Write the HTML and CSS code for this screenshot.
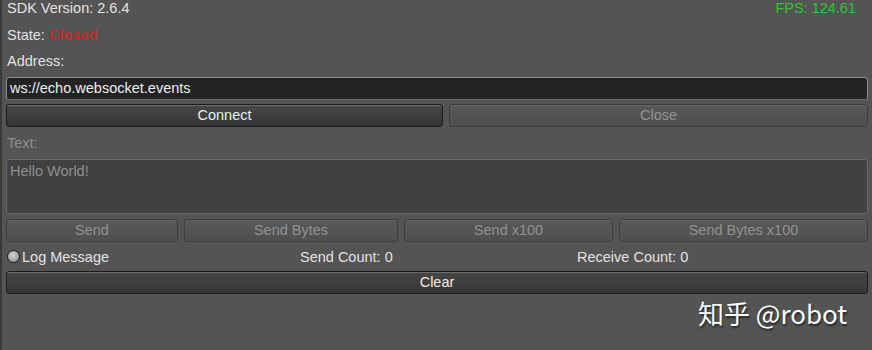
FILE: index.html
```html
<!DOCTYPE html>
<html lang="en">
<head>
  <meta charset="UTF-8">
  <title>WebSocket Sample</title>
  <link rel="stylesheet" href="styles.css">
</head>
<body>
  <div class="screen">
    <div class="fps">FPS: 124.61</div>

    <div class="label row-sdk">SDK Version: 2.6.4</div>
    <div class="label row-state">State: <span class="closed">Closed</span></div>
    <div class="label row-address">Address:</div>

    <div class="field">ws://echo.websocket.events</div>

    <div class="btn-row two">
      <div class="btn">Connect</div>
      <div class="btn disabled">Close</div>
    </div>

    <div class="label dim row-text">Text:</div>
    <div class="textarea">Hello World!</div>

    <div class="btn-row four">
      <div class="btn disabled">Send</div>
      <div class="btn disabled">Send Bytes</div>
      <div class="btn disabled">Send x100</div>
      <div class="btn disabled">Send Bytes x100</div>
    </div>

    <div class="stats">
      <div class="toggle"><span class="knob"></span>Log Message</div>
      <div>Send Count: 0</div>
      <div>Receive Count: 0</div>
    </div>

    <div class="btn wide">Clear</div>

    <div class="watermark">知乎 @robot</div>
  </div>
</body>
</html>
```

FILE: styles.css
```css
html, body {
  margin: 0;
  padding: 0;
}

body {
  background-color: #545454;
  font-family: "Liberation Sans", Arial, sans-serif;
  font-size: 14.5px;
  color: #e2e2e2;
}

.screen {
  position: relative;
  width: 872px;
  height: 350px;
  box-sizing: border-box;
  border-left: 2px solid #3a3a3a;
  padding: 0 4px 0 4px;
  overflow: hidden;
}

.fps {
  position: absolute;
  top: 0;
  right: 16px;
  color: #36c236;
  line-height: 16px;
}

.label {
  padding-left: 1px;
  line-height: 16px;
  box-sizing: border-box;
}

.row-sdk {
  height: 27px;
}

.row-state {
  height: 26px;
}

.row-address {
  height: 24px;
}

.row-text {
  padding-top: 8px;
  height: 32px;
}

.closed {
  color: #c32a2d;
  font-weight: bold;
}

.dim {
  color: #8e8e8e;
}

.field {
  height: 23px;
  box-sizing: border-box;
  line-height: 21px;
  padding-left: 3px;
  background-color: #232323;
  border: 1px solid #8c8c8c;
  border-bottom-color: #6a6a6a;
  border-radius: 3px;
  color: #eeeeee;
}

.btn-row {
  display: grid;
  gap: 6px;
  margin-top: 4px;
}

.btn-row.two {
  grid-template-columns: 437px 1fr;
}

.btn-row.four {
  grid-template-columns: 172px 214px 209px 1fr;
  margin-top: 5px;
}

.btn {
  height: 23px;
  box-sizing: border-box;
  line-height: 21px;
  text-align: center;
  background: linear-gradient(#474747, #353535);
  border: 1px solid #1c1c1c;
  border-radius: 3px;
  box-shadow: inset 0 1px #6c6c6c;
  color: #ececec;
}

.btn.disabled {
  background: linear-gradient(#595959, #4f4f4f);
  border-color: #3e3e3e;
  box-shadow: inset 0 1px #646464;
  color: #929292;
}

.textarea {
  height: 55px;
  padding: 3px 0 0 3px;
  box-sizing: border-box;
  background-color: #414141;
  border: 1px solid #6a6a6a;
  border-radius: 3px;
  color: #8e8e8e;
  line-height: 16px;
}

.stats {
  display: grid;
  grid-template-columns: 293px 277px 1fr;
  height: 29px;
  align-items: center;
  padding-left: 1px;
}

.toggle {
  display: flex;
  align-items: center;
  gap: 2px;
}

.knob {
  width: 11px;
  height: 11px;
  border-radius: 50%;
  background: radial-gradient(circle at 45% 40%, #d4d4d4, #9a9a9a 70%);
  border: 1px solid #1e1e1e;
}

.watermark {
  position: absolute;
  left: 696px;
  top: 294px;
  font-family: "Noto Sans CJK SC", "Noto Sans", sans-serif;
  font-size: 26px;
  color: #ffffff;
  text-shadow: 1px 2px 2px rgba(0, 0, 0, 0.55);
  white-space: nowrap;
}
```
